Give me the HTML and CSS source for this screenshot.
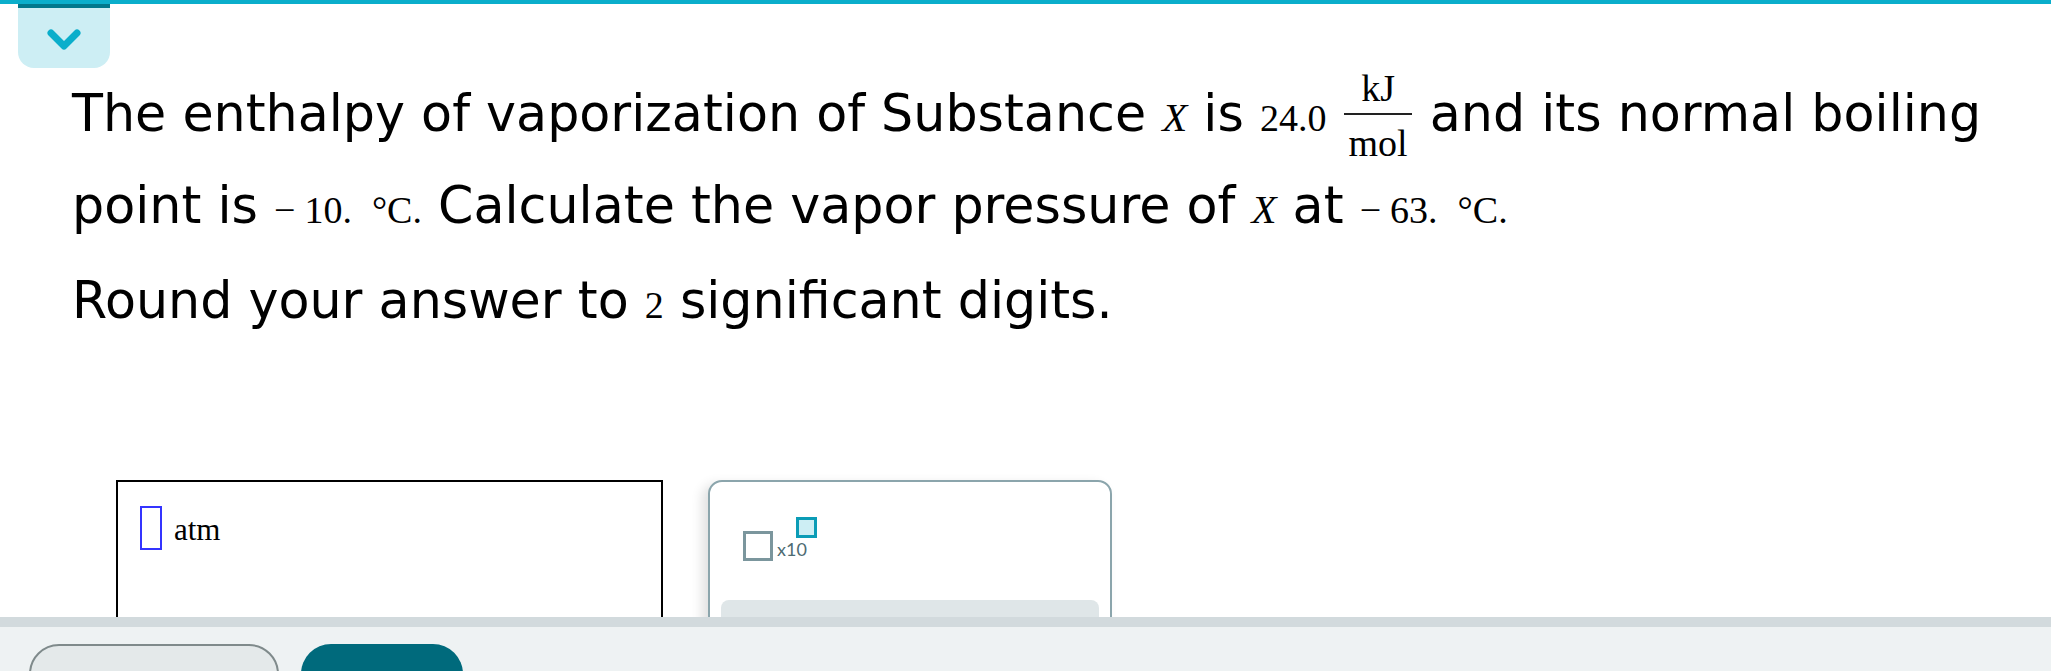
FILE: index.html
```html
<!DOCTYPE html>
<html lang="en">
<head>
    <meta charset="UTF-8">
    <meta name="viewport" content="width=device-width, initial-scale=1.0">
    <title>Vapor Pressure Question</title>
    <link rel="stylesheet" href="styles.css">
</head>
<body>
    <div class="page">
        <div class="main">
            <div class="tab-row">
                <button class="collapse-tab" aria-label="Collapse">
                    <svg width="34" height="21" viewBox="0 0 34 21">
                        <path d="M4 4 L17 17 L30 4" fill="none" stroke="#0aaecb" stroke-width="7" stroke-linecap="round" stroke-linejoin="round"/>
                    </svg>
                </button>
            </div>

            <div class="question">
                <p class="statement">The enthalpy of vaporization of Substance <span class="math var">X</span> is <span class="math">24.0<span class="frac"><span class="num">kJ</span><span class="den">mol</span></span></span> and its normal boiling point is <span class="math"><span class="sign">&minus;</span>10.<span class="unit">&deg;C</span>.</span> Calculate the vapor pressure of <span class="math var">X</span> at <span class="math"><span class="sign">&minus;</span>63.<span class="unit">&deg;C</span>.</span></p>
                <p class="instruction">Round your answer to <span class="math">2</span> significant digits.</p>
            </div>

            <div class="answer-row">
                <div class="answer-box">
                    <span class="blank"></span>
                    <span class="answer-unit">atm</span>
                </div>
                <div class="keypad">
                    <div class="sci-notation">
                        <span class="slot"></span>
                        <span class="times">x10</span>
                        <span class="slot exponent"></span>
                    </div>
                    <div class="key-bar"></div>
                </div>
            </div>
        </div>

        <div class="footer">
            <button class="btn btn-secondary">Explanation</button>
            <button class="btn btn-primary">Check</button>
        </div>
    </div>
</body>
</html>
```

FILE: styles.css
```css
body {
    margin: 0;
    font-family: "DejaVu Sans", Verdana, sans-serif;
    color: #000;
    background-color: #fff;
    overflow: hidden;
}
.page {
    height: 671px;
    display: flex;
    flex-direction: column;
}
.main {
    flex: none;
    height: 617px;
    box-sizing: border-box;
    border-top: 4px solid #0aaecb;
    overflow: hidden;
}
.tab-row {
    height: 64px;
    padding-left: 18px;
}
.collapse-tab {
    width: 92px;
    height: 64px;
    box-sizing: border-box;
    border: none;
    border-top: 4px solid #00788c;
    border-radius: 0 0 16px 16px;
    background-color: #cdeef4;
    padding: 21px 0 0;
    display: flex;
    justify-content: center;
    align-items: flex-start;
    cursor: pointer;
}
.question {
    padding: 0 20px 0 72px;
    font-size: 50.7px;
}
.question p {
    margin: 0;
    line-height: 92px;
}
.question .instruction {
    margin-top: 3px;
}
.math {
    font-family: "Liberation Serif", "Times New Roman", serif;
    font-size: 38px;
    line-height: 1;
}
.var {
    font-style: italic;
    font-size: 41px;
}
.sign {
    margin-right: 9px;
}
.unit {
    margin-left: 20px;
}
.frac {
    display: inline-flex;
    flex-direction: column;
    align-items: stretch;
    text-align: center;
    vertical-align: 30px;
    margin: 0 2px 0 18px;
    line-height: 30px;
}
.frac .num {
    padding: 0 4px 10px;
    border-bottom: 2px solid #222;
}
.frac .den {
    padding: 13px 4px 0;
}
.answer-row {
    display: flex;
    align-items: flex-start;
    padding-left: 116px;
    margin-top: 133px;
}
.answer-box {
    width: 547px;
    height: 220px;
    box-sizing: border-box;
    border: 2px solid #000;
    padding: 24px 22px;
    display: flex;
    align-items: flex-start;
    font-family: "Liberation Serif", "Times New Roman", serif;
}
.blank {
    width: 22px;
    height: 44px;
    box-sizing: border-box;
    border: 2px solid #3434ff;
    margin-right: 12px;
}
.answer-unit {
    font-size: 31px;
    line-height: 32px;
    margin-top: 8px;
}
.keypad {
    margin-left: 45px;
    width: 404px;
    height: 220px;
    box-sizing: border-box;
    border: 2px solid #8ba5ac;
    border-radius: 14px;
    box-shadow: -6px 4px 12px rgba(0,0,0,0.12);
    padding: 35px 11px 0;
    background-color: #fff;
}
.sci-notation {
    display: flex;
    align-items: flex-end;
    height: 44px;
    margin-left: 22px;
}
.slot {
    width: 30px;
    height: 30px;
    box-sizing: border-box;
    border: 3px solid #7b969d;
}
.times {
    font-family: Lato, "Open Sans", sans-serif;
    font-size: 18px;
    line-height: 1;
    color: #4d6b73;
    margin: 0 0 3px 4px;
}
.exponent {
    width: 21px;
    height: 21px;
    align-self: flex-start;
    margin-left: -11px;
    border-color: #0b9cb6;
    background-color: #cdeef4;
}
.key-bar {
    margin-top: 39px;
    height: 60px;
    background-color: #dfe6e8;
    border-radius: 8px;
}
.footer {
    flex: none;
    height: 54px;
    box-sizing: border-box;
    border-top: 10px solid #d2dadd;
    background-color: #eef2f3;
    padding: 17px 0 0 29px;
    display: flex;
    align-items: flex-start;
    gap: 22px;
    overflow: hidden;
}
.btn {
    flex: none;
    height: 60px;
    border-radius: 30px;
    font-family: "Open Sans", sans-serif;
    font-size: 18px;
    padding-top: 24px;
    box-sizing: border-box;
}
.btn-secondary {
    width: 250px;
    border: 2px solid #7f8a8b;
    background-color: #e4e9ea;
    color: #2b3a3e;
}
.btn-primary {
    width: 162px;
    border: none;
    background-color: #006a7c;
    color: #fff;
}
```
